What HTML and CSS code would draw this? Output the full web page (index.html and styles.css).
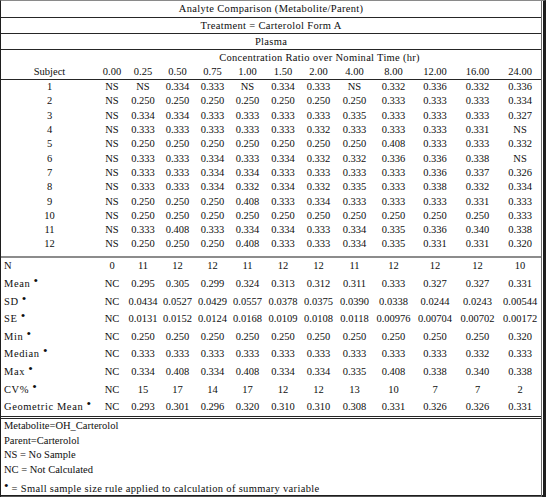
FILE: index.html
```html
<!DOCTYPE html>
<html>
<head>
<meta charset="utf-8">
<link rel="stylesheet" href="styles.css">
</head>
<body>
<div class="frame">
<table class="report">
<colgroup>
<col class="c-subj"><col class="c28"><col class="c34"><col class="c35"><col class="c35"><col class="c35"><col class="c36"><col class="c35"><col class="c37"><col class="c41"><col class="c42"><col class="c43"><col class="c42">
</colgroup>
<tbody>
<tr class="title t1"><td colspan="13">Analyte Comparison (Metabolite/Parent)</td></tr>
<tr class="title"><td colspan="13">Treatment = Carterolol Form A</td></tr>
<tr class="title"><td colspan="13">Plasma</td></tr>
<tr class="span-head"><td></td><td colspan="12">Concentration Ratio over Nominal Time (hr)</td></tr>
<tr class="col-head"><td>Subject</td><td>0.00</td><td>0.25</td><td>0.50</td><td>0.75</td><td>1.00</td><td>1.50</td><td>2.00</td><td>4.00</td><td>8.00</td><td>12.00</td><td>16.00</td><td>24.00</td></tr>
<tr class="data"><td>1</td><td>NS</td><td>NS</td><td>0.334</td><td>0.333</td><td>NS</td><td>0.334</td><td>0.333</td><td>NS</td><td>0.332</td><td>0.336</td><td>0.332</td><td>0.336</td></tr>
<tr class="data"><td>2</td><td>NS</td><td>0.250</td><td>0.250</td><td>0.250</td><td>0.250</td><td>0.250</td><td>0.250</td><td>0.250</td><td>0.333</td><td>0.333</td><td>0.333</td><td>0.334</td></tr>
<tr class="data"><td>3</td><td>NS</td><td>0.334</td><td>0.334</td><td>0.333</td><td>0.333</td><td>0.333</td><td>0.333</td><td>0.335</td><td>0.333</td><td>0.333</td><td>0.333</td><td>0.327</td></tr>
<tr class="data"><td>4</td><td>NS</td><td>0.333</td><td>0.333</td><td>0.333</td><td>0.333</td><td>0.333</td><td>0.332</td><td>0.333</td><td>0.333</td><td>0.333</td><td>0.331</td><td>NS</td></tr>
<tr class="data"><td>5</td><td>NS</td><td>0.250</td><td>0.250</td><td>0.250</td><td>0.250</td><td>0.250</td><td>0.250</td><td>0.250</td><td>0.408</td><td>0.333</td><td>0.333</td><td>0.332</td></tr>
<tr class="data"><td>6</td><td>NS</td><td>0.333</td><td>0.333</td><td>0.334</td><td>0.333</td><td>0.334</td><td>0.332</td><td>0.332</td><td>0.336</td><td>0.336</td><td>0.338</td><td>NS</td></tr>
<tr class="data"><td>7</td><td>NS</td><td>0.333</td><td>0.333</td><td>0.334</td><td>0.334</td><td>0.333</td><td>0.333</td><td>0.333</td><td>0.333</td><td>0.336</td><td>0.337</td><td>0.326</td></tr>
<tr class="data"><td>8</td><td>NS</td><td>0.333</td><td>0.333</td><td>0.334</td><td>0.332</td><td>0.334</td><td>0.332</td><td>0.335</td><td>0.333</td><td>0.338</td><td>0.332</td><td>0.334</td></tr>
<tr class="data"><td>9</td><td>NS</td><td>0.250</td><td>0.250</td><td>0.250</td><td>0.408</td><td>0.333</td><td>0.334</td><td>0.333</td><td>0.333</td><td>0.333</td><td>0.331</td><td>0.333</td></tr>
<tr class="data"><td>10</td><td>NS</td><td>0.250</td><td>0.250</td><td>0.250</td><td>0.250</td><td>0.250</td><td>0.250</td><td>0.250</td><td>0.250</td><td>0.250</td><td>0.250</td><td>0.333</td></tr>
<tr class="data"><td>11</td><td>NS</td><td>0.333</td><td>0.408</td><td>0.333</td><td>0.334</td><td>0.334</td><td>0.333</td><td>0.334</td><td>0.335</td><td>0.336</td><td>0.340</td><td>0.338</td></tr>
<tr class="data data-last"><td>12</td><td>NS</td><td>0.250</td><td>0.250</td><td>0.250</td><td>0.408</td><td>0.333</td><td>0.333</td><td>0.334</td><td>0.335</td><td>0.331</td><td>0.331</td><td>0.320</td></tr>
<tr class="stat first"><td class="lbl">N</td><td>0</td><td>11</td><td>12</td><td>12</td><td>11</td><td>12</td><td>12</td><td>11</td><td>12</td><td>12</td><td>12</td><td>10</td></tr>
<tr class="stat"><td class="lbl">Mean <sup class="mk">•</sup></td><td>NC</td><td>0.295</td><td>0.305</td><td>0.299</td><td>0.324</td><td>0.313</td><td>0.312</td><td>0.311</td><td>0.333</td><td>0.327</td><td>0.327</td><td>0.331</td></tr>
<tr class="stat"><td class="lbl">SD <sup class="mk">•</sup></td><td>NC</td><td>0.0434</td><td>0.0527</td><td>0.0429</td><td>0.0557</td><td>0.0378</td><td>0.0375</td><td>0.0390</td><td>0.0338</td><td>0.0244</td><td>0.0243</td><td>0.00544</td></tr>
<tr class="stat"><td class="lbl">SE <sup class="mk">•</sup></td><td>NC</td><td>0.0131</td><td>0.0152</td><td>0.0124</td><td>0.0168</td><td>0.0109</td><td>0.0108</td><td>0.0118</td><td>0.00976</td><td>0.00704</td><td>0.00702</td><td>0.00172</td></tr>
<tr class="stat"><td class="lbl">Min <sup class="mk">•</sup></td><td>NC</td><td>0.250</td><td>0.250</td><td>0.250</td><td>0.250</td><td>0.250</td><td>0.250</td><td>0.250</td><td>0.250</td><td>0.250</td><td>0.250</td><td>0.320</td></tr>
<tr class="stat"><td class="lbl">Median <sup class="mk">•</sup></td><td>NC</td><td>0.333</td><td>0.333</td><td>0.333</td><td>0.333</td><td>0.333</td><td>0.333</td><td>0.333</td><td>0.333</td><td>0.333</td><td>0.332</td><td>0.333</td></tr>
<tr class="stat"><td class="lbl">Max <sup class="mk">•</sup></td><td>NC</td><td>0.334</td><td>0.408</td><td>0.334</td><td>0.408</td><td>0.334</td><td>0.334</td><td>0.335</td><td>0.408</td><td>0.338</td><td>0.340</td><td>0.338</td></tr>
<tr class="stat"><td class="lbl">CV% <sup class="mk">•</sup></td><td>NC</td><td>15</td><td>17</td><td>14</td><td>17</td><td>12</td><td>12</td><td>13</td><td>10</td><td>7</td><td>7</td><td>2</td></tr>
<tr class="stat last"><td class="lbl">Geometric Mean <sup class="mk">•</sup></td><td>NC</td><td>0.293</td><td>0.301</td><td>0.296</td><td>0.320</td><td>0.310</td><td>0.310</td><td>0.308</td><td>0.331</td><td>0.326</td><td>0.326</td><td>0.331</td></tr>
<tr class="note"><td colspan="13">Metabolite=OH_Carterolol</td></tr>
<tr class="note"><td colspan="13">Parent=Carterolol</td></tr>
<tr class="note"><td colspan="13">NS = No Sample</td></tr>
<tr class="note"><td colspan="13">NC = Not Calculated</td></tr>
<tr class="note note-last"><td colspan="13"><sup class="mk">•</sup> = Small sample size rule applied to calculation of summary variable</td></tr>
</tbody>
</table>
</div>
</body>
</html>
```
FILE: styles.css
```css
html, body {
  margin: 0;
  padding: 0;
  background: #ffffff;
}

.frame {
  box-sizing: border-box;
  width: 546px;
  height: 497px;
  border-left: 1px solid #1e1e1e;
  border-top: 1px solid #8a8a8a;
  border-right: 3px solid #1e1e1e;
  border-bottom: 2px solid #1e1e1e;
  padding-right: 1px;
  font-family: "Liberation Serif", "Times New Roman", serif;
  font-size: 10.5px;
  color: #0e0e0e;
}

.report {
  table-layout: fixed;
  width: 541px;
  border-collapse: separate;
  border-spacing: 0;
  border-right: 1px solid #6a6a6a;
  border-bottom: 1px solid #555;
}

.c-subj { width: 97px; }
.c28 { width: 28px; }
.c34 { width: 34px; }
.c35 { width: 35px; }
.c36 { width: 36px; }
.c37 { width: 37px; }
.c41 { width: 41px; }
.c42 { width: 42px; }
.c43 { width: 43px; }

.report td {
  padding: 0;
  text-align: center;
  white-space: nowrap;
  vertical-align: middle;
  line-height: 12px;
  overflow: visible;
}

.title td {
  height: 15px;
  letter-spacing: 0.33px;
  border-bottom: 1px solid #262626;
}

.title.t1 td {
  height: 16px;
}

.span-head td {
  height: 15px;
  letter-spacing: 0.3px;
}

.col-head td {
  height: 14px;
  border-bottom: 1px solid #262626;
}

.data td {
  height: 14.3px;
}

.data.data-last td {
  height: 14.3px;
  padding-bottom: 4px;
}

.stat td {
  height: 17.6px;
}

.stat.first td {
  border-top: 2px solid #8c8c8c;
}

.stat.last td {
  border-bottom: 3px double #262626;
}

.report td.lbl {
  text-align: left;
  padding-left: 3px;
  letter-spacing: 0.6px;
}

.mk {
  font-size: 13px;
  line-height: 0;
  vertical-align: 2px;
  margin-left: 0;
  letter-spacing: 0;
}

.note td {
  text-align: left;
  padding-left: 3px;
  height: 14.5px;
}

.note.note-last td {
  height: 18px;
  vertical-align: bottom;
  padding-bottom: 1px;
  letter-spacing: 0.33px;
}
```
